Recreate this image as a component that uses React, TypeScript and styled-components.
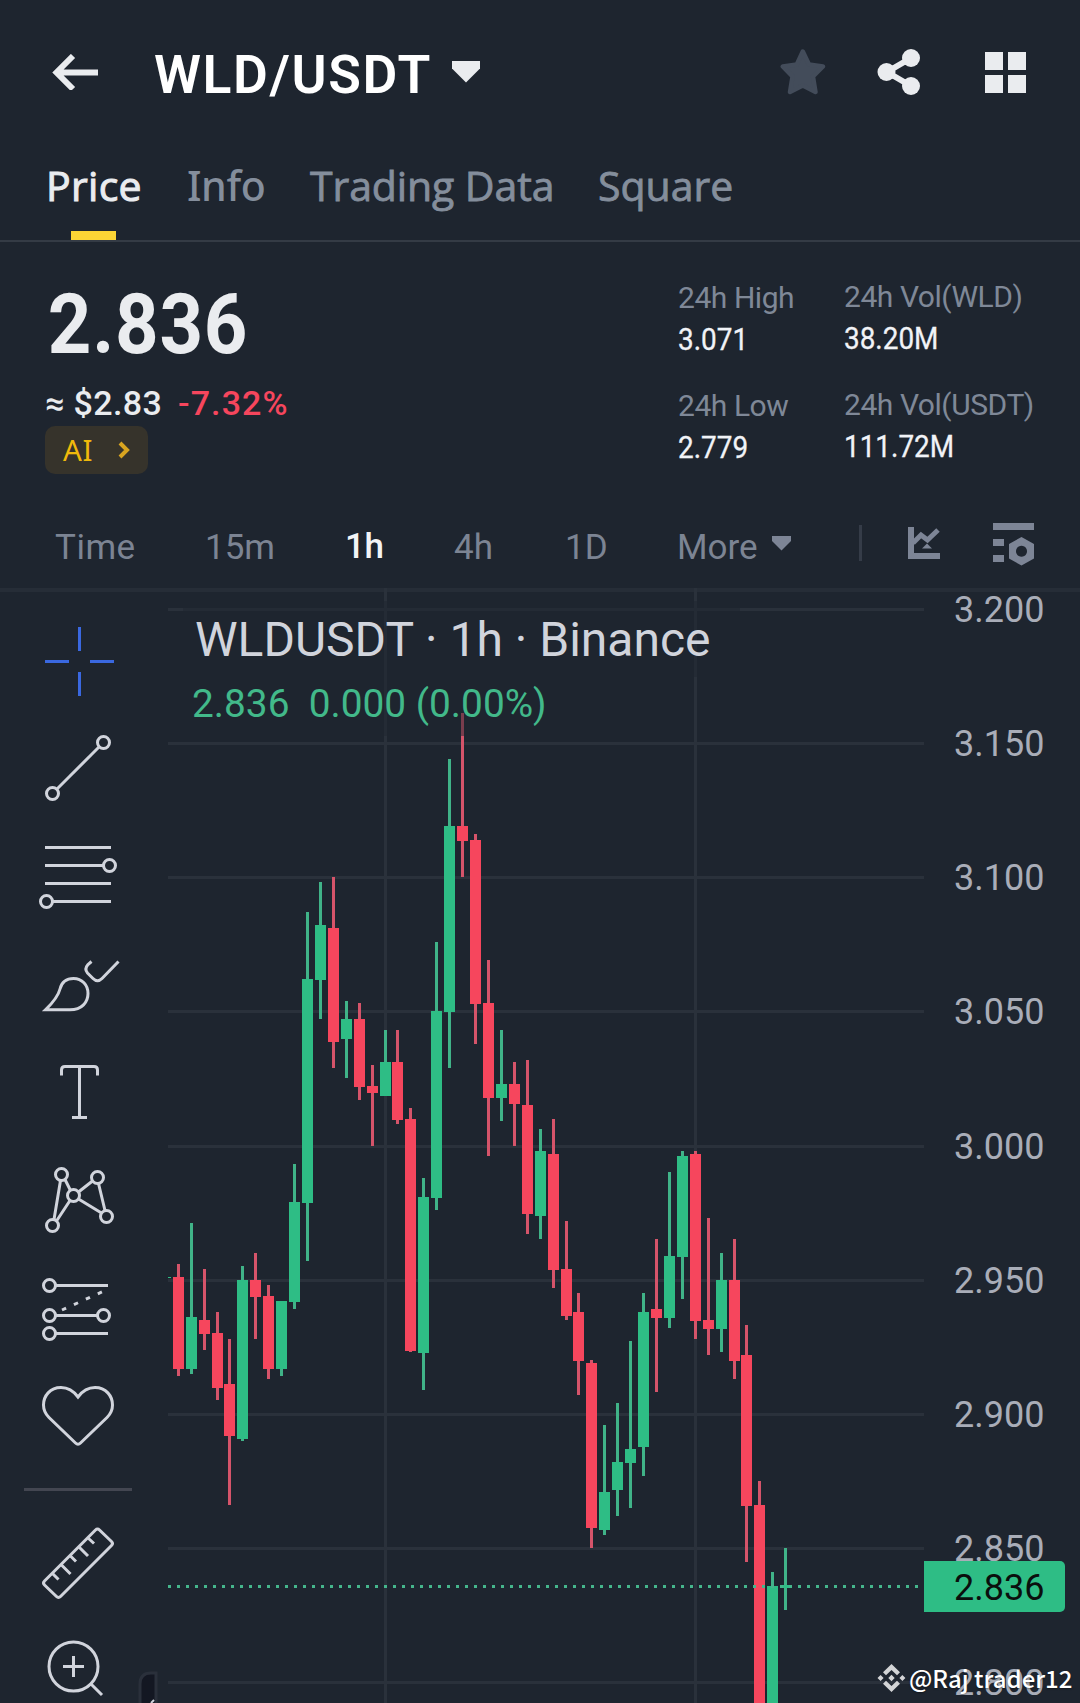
import React from 'react';
import styled, { createGlobalStyle } from 'styled-components';

const BG = '#1e252f';
const UP = '#2ebd85';
const DOWN = '#f6465d';

const GlobalStyle = createGlobalStyle`
  html, body { margin: 0; padding: 0; background: ${BG}; }
  * { box-sizing: border-box; }
  svg { display: block; flex: none; }
`;

const Screen = styled.main`
  width: 1080px;
  height: 1703px;
  overflow: hidden;
  position: relative;
  display: flex;
  flex-direction: column;
  background: ${BG};
  color: #eaecef;
  font-family: Roboto, "Liberation Sans", sans-serif;
`;

const Header = styled.header`
  height: 144px;
  padding: 0 54px 0 52px;
  display: flex;
  align-items: center;
`;

const Pair = styled.h1`
  margin: 0 0 0 56px;
  width: 276px;
  font-size: 53.5px;
  line-height: 60px;
  font-weight: 600;
  letter-spacing: 1.6px;
  color: #fff;
  white-space: nowrap;
  padding-top: 5px;
`;

const PairCaret = styled.div`
  margin-left: 22px;
`;

const HeaderActions = styled.div`
  margin-left: auto;
  display: flex;
  align-items: center;
`;

const ActionSlot = styled.div<{ $gap: number }>`
  margin-left: ${(p) => p.$gap}px;
`;

const Tabs = styled.nav`
  height: 98px;
  border-bottom: 2px solid #343b45;
  padding-left: 46px;
  display: flex;
`;

const Tab = styled.div<{ $active?: boolean; $w: number; $track?: number }>`
  width: ${(p) => p.$w}px;
  padding-top: 13px;
  font-family: "Open Sans", "Noto Sans", sans-serif;
  font-size: 41px;
  line-height: 56px;
  font-weight: 500;
  -webkit-text-stroke: ${(p) => (p.$active ? '1px' : '0.8px')} currentColor;
  letter-spacing: ${(p) => p.$track ?? 0}px;
  white-space: nowrap;
  color: ${(p) => (p.$active ? '#eaecef' : '#848e9c')};
`;

const SlabTab = styled(Tab)`
  font-family: "Noto Sans", "Open Sans", sans-serif;
  -webkit-text-stroke: 0;
`;

const Underline = styled.div`
  width: 45px;
  height: 9px;
  margin: 18px 0 0 25px;
  background: #fcd535;
`;

const Summary = styled.section`
  height: 268px;
  display: flex;
  padding-left: 45px;
`;

const PriceBlock = styled.div`
  width: 633px;
  display: flex;
  flex-direction: column;
`;

const LastPrice = styled.div`
  margin-top: 33px;
  height: 97px;
  padding-left: 3px;
  font-size: 84px;
  line-height: 100px;
  font-weight: 700;
  letter-spacing: 0.9px;
  transform: scaleX(0.905);
  transform-origin: left;
`;

const SubPrice = styled.div`
  display: flex;
  height: 54px;
  font-size: 34px;
  line-height: 63px;
  font-weight: 500;
`;

const Fiat = styled.span`
  width: 133px;
  white-space: nowrap;
  letter-spacing: 0.35px;
`;

const Change = styled.span`
  color: ${DOWN};
  letter-spacing: 1.1px;
`;

const AiBadge = styled.div`
  width: 103px;
  height: 48px;
  border-radius: 10px;
  background: #36332b;
  color: #f0b90b;
  display: flex;
  align-items: center;
  justify-content: space-between;
  padding: 0 18px;
  font-family: "Noto Sans", sans-serif;
  font-size: 29.5px;
  line-height: 48px;
  letter-spacing: 0.6px;
`;

const Stats = styled.div`
  display: grid;
  grid-template-columns: 166px 236px;
  grid-template-rows: 108px 108px;
  padding-top: 36px;
`;

const Stat = styled.div<{ $raise?: boolean }>`
  display: flex;
  flex-direction: column;
  margin-top: ${(p) => (p.$raise ? -1 : 0)}px;
`;

const StatLabel = styled.span`
  font-size: 30px;
  line-height: 40px;
  height: 42px;
  color: #7f8897;
  white-space: nowrap;
  letter-spacing: -0.45px;
`;

const StatValue = styled.span`
  font-size: 30.5px;
  line-height: 40px;
  color: #f1f3f7;
  white-space: nowrap;
  -webkit-text-stroke: 0.3px currentColor;
  transform: scaleX(0.915);
  transform-origin: left;
`;

const Intervals = styled.nav`
  height: 82px;
  border-bottom: 4px solid #262d37;
  padding-left: 55px;
  display: flex;
`;

const Interval = styled.div<{ $w: number; $active?: boolean; $track?: number }>`
  width: ${(p) => p.$w}px;
  padding-top: ${(p) => (p.$active ? 17 : 18)}px;
  font-size: 35px;
  line-height: 40px;
  font-weight: ${(p) => (p.$active ? 500 : 400)};
  color: ${(p) => (p.$active ? '#f3f4f7' : '#7c8493')};
  letter-spacing: ${(p) => p.$track ?? 0}px;
  white-space: nowrap;
`;

const ToolSlot = styled.div<{ $top: number; $gap: number }>`
  margin: ${(p) => p.$top}px 0 0 ${(p) => p.$gap}px;
`;

const Separator = styled.div`
  width: 3px;
  height: 36px;
  margin: 15px 0 0 68px;
  background: #353c48;
`;

const ChartArea = styled.section`
  flex: 1;
  display: flex;
  position: relative;
`;

const Legend = styled.div`
  position: absolute;
  left: 183px;
  top: 9px;
  display: flex;
  flex-direction: column;
  align-items: flex-start;
`;

const LegendTitle = styled.div`
  height: 76px;
  width: 557px;
  padding-left: 12px;
  font-size: 48px;
  line-height: 78px;
  color: #d1d4dc;
  background: rgba(30, 37, 47, 0.5);
  white-space: pre;
`;

const LegendValues = styled.div`
  height: 59px;
  width: 380px;
  padding-left: 9px;
  font-size: 38.8px;
  line-height: 54px;
  color: #42b98a;
  background: rgba(30, 37, 47, 0.5);
  white-space: pre;
`;

const Watermark = styled.div`
  position: absolute;
  left: 877px;
  bottom: 7px;
  height: 36px;
  display: flex;
  align-items: center;
  gap: 3px;
  color: #fff;
  font-family: "Noto Sans CJK SC", "Noto Sans", sans-serif;
  font-size: 24px;
  line-height: 36px;
  font-weight: 500;
  white-space: nowrap;
  text-shadow: 0 1px 2px rgba(0, 0, 0, 0.4);
`;

type Candle = [x: number, up: 0 | 1, high: number, top: number, bottom: number, low: number];

const candles: Candle[] = [
  [173, 0, 1264, 1277, 1369, 1376],
  [186, 1, 1223, 1317, 1369, 1374],
  [199, 0, 1269, 1320, 1334, 1350],
  [212, 0, 1312, 1333, 1388, 1400],
  [224, 0, 1339, 1384, 1436, 1505],
  [237, 1, 1266, 1280, 1439, 1441],
  [250, 0, 1253, 1280, 1297, 1339],
  [263, 0, 1285, 1296, 1369, 1379],
  [276, 1, 1301, 1301, 1369, 1376],
  [289, 1, 1164, 1202, 1302, 1309],
  [302, 1, 912, 979, 1203, 1261],
  [315, 1, 882, 925, 980, 1019],
  [328, 0, 877, 928, 1042, 1068],
  [341, 1, 1001, 1019, 1039, 1078],
  [354, 0, 1003, 1019, 1087, 1100],
  [367, 0, 1065, 1086, 1093, 1146],
  [380, 1, 1030, 1062, 1096, 1096],
  [392, 0, 1030, 1062, 1120, 1124],
  [405, 0, 1108, 1119, 1351, 1352],
  [418, 1, 1178, 1197, 1353, 1390],
  [431, 1, 942, 1011, 1198, 1210],
  [444, 1, 759, 826, 1012, 1068],
  [457, 0, 713, 826, 841, 877],
  [470, 0, 834, 840, 1004, 1044],
  [483, 0, 960, 1003, 1098, 1156],
  [496, 1, 1030, 1084, 1098, 1121],
  [509, 0, 1062, 1084, 1104, 1146],
  [522, 0, 1060, 1105, 1214, 1234],
  [535, 1, 1129, 1151, 1216, 1239],
  [548, 0, 1119, 1154, 1270, 1288],
  [561, 0, 1221, 1269, 1316, 1320],
  [573, 0, 1293, 1312, 1361, 1395],
  [586, 0, 1360, 1363, 1528, 1548],
  [599, 1, 1425, 1492, 1530, 1535],
  [612, 1, 1403, 1462, 1490, 1516],
  [625, 1, 1341, 1449, 1463, 1508],
  [638, 1, 1293, 1312, 1447, 1476],
  [651, 0, 1239, 1309, 1318, 1392],
  [664, 1, 1172, 1256, 1318, 1328],
  [677, 1, 1151, 1156, 1257, 1299],
  [690, 0, 1151, 1154, 1321, 1339],
  [703, 0, 1218, 1320, 1329, 1355],
  [716, 1, 1253, 1280, 1329, 1352],
  [729, 0, 1239, 1280, 1361, 1379],
  [741, 0, 1325, 1355, 1506, 1562],
  [754, 0, 1481, 1505, 1703, 1703],
  [767, 1, 1572, 1586, 1703, 1703],
  [780, 1, 1548, 1585, 1588, 1610],
];

const levels: [string, number][] = [
  ['3.200', 609.5],
  ['3.150', 743.5],
  ['3.100', 877.5],
  ['3.050', 1011.5],
  ['3.000', 1146.5],
  ['2.950', 1280.5],
  ['2.900', 1414.5],
  ['2.850', 1548.5],
  ['2.800', 1682.5],
];

const AxisText = styled.text<{ $ink: string }>`
  font-family: Roboto, "Liberation Sans", sans-serif;
  font-size: 36px;
  fill: ${(p) => p.$ink};
`;

const ChartSvg = styled.svg`
  overflow: visible;
`;

function CandleChart() {
  return (
    <ChartSvg width="912" height="1111" viewBox="168 592 912 1111">
      <g stroke="#2a313b" strokeWidth="3">
        {levels.map(([label, y]) => (
          <line key={label} x1="168" x2="924" y1={y} y2={y} />
        ))}
        <line x1="385.5" x2="385.5" y1="588" y2="1703" />
        <line x1="695.5" x2="695.5" y1="588" y2="1703" />
      </g>
      <rect x="168" y="1277" width="3" height="1" fill={UP} />
      {candles.map(([x, up, high, top, bottom, low]) => (
        <g key={x} fill={up ? UP : DOWN}>
          <rect x={x + 4} y={high} width="3" height={low - high} fill={up ? '#40b388' : '#d5546a'} />
          <rect x={x} y={top} width="11" height={bottom - top} />
        </g>
      ))}
      <line x1="168" x2="922" y1="1586.5" y2="1586.5" stroke="#45b68c" strokeWidth="3" strokeDasharray="3 6" />
      {levels.map(([label, y]) => (
        <AxisText key={label} $ink="#a9adb8" x="954" y={y + 12.5}>
          {label}
        </AxisText>
      ))}
      <path d="M924 1561h136a5 5 0 0 1 5 5v41a5 5 0 0 1-5 5H924z" fill={UP} />
      <AxisText $ink="#0a0f0d" x="954" y="1600">
        2.836
      </AxisText>
    </ChartSvg>
  );
}

function DrawingTools() {
  return (
    <svg width="168" height="1111" viewBox="0 592 168 1111" fill="none" stroke="#d1d4dc" strokeWidth="3">
      <path d="M45 661.5h24M90 661.5h24M79.5 627v24M79.5 672v24" stroke="#3a68e0" />
      <circle cx="52.5" cy="793.5" r="6" />
      <circle cx="103.5" cy="742.5" r="6" />
      <path d="M57 789l42-42" />
      <path d="M45 847.5h66M45 865.5h58M45 883.5h66M53 901.5h58" />
      <circle cx="109.5" cy="865.5" r="6" />
      <circle cx="46.5" cy="901.5" r="6" />
      <path d="M45.5 1009.8H70C82 1009.8 88 1002 88 993.5C88 985 82 978.5 73.5 978.5C66 978.5 61.5 983 60 989C58 997 51 1004.5 45.5 1009.8Z" />
      <path d="M91.5 961.5L88 964.5Q84 969 87.5 973L93 978.5Q97.5 983 102 978.5L118.5 961.5" />
      <path d="M61.5 1075.5V1070q0-3.5 3.5-3.5H94q3.5 0 3.5 3.5v5.5M79.5 1066.5v51M72 1117.5h15" />
      <circle cx="61.5" cy="1174.5" r="6" />
      <circle cx="97.5" cy="1177.5" r="6" />
      <circle cx="73.5" cy="1195.5" r="6" />
      <circle cx="52.5" cy="1225.5" r="6" />
      <circle cx="106.5" cy="1216.5" r="6" />
      <path d="M60.5 1180.5L54 1219.5M65 1179.5L70.5 1190.5M92.5 1181L78.5 1192M70 1200.5L56.5 1221M98.5 1183.5L105 1210.5M78.5 1199L101.5 1213" />
      <circle cx="49.5" cy="1285.5" r="6" />
      <circle cx="49.5" cy="1315.5" r="6" />
      <circle cx="103.5" cy="1315.5" r="6" />
      <circle cx="49.5" cy="1333.5" r="6" />
      <path d="M56 1285.5h52M56 1315.5h41M56 1333.5h52" />
      <path d="M62 1310L104 1291" strokeDasharray="4.5 8.6" />
      <path d="M78 1397Q71 1387.5 61 1387.5C50 1387.5 43.5 1396 43.5 1405Q43.5 1412 49 1417.5L75.5 1443Q78 1445.5 80.5 1443L107 1417.5Q112.5 1412 112.5 1405C112.5 1396 106 1387.5 95 1387.5Q85 1387.5 78 1397Z" />
      <path d="M24 1489.5h108" stroke="#434651" />
      <path d="M95.5 1530Q97.5 1528 99.5 1530L111.5 1541.5Q113.5 1543.5 111.5 1545.5L60.5 1596.5Q58.5 1598.5 56.5 1596.5L44.5 1585Q42.5 1583 44.5 1581Z" />
      <path d="M52.5 1573.5l6 6M61 1564.5l9.5 9.5M70 1555.5l6 6M78.5 1546.5l9.5 9.5M87.5 1537.5l6.5 6" />
      <circle cx="73.5" cy="1666.5" r="24.5" />
      <path d="M63 1666.5h21M73.5 1656v21M91 1684l11 11" />
      <path d="M140 1706V1684q0-11 11-11h5v33z" fill="#131722" stroke="#2a303b" />
      <path d="M151 1703l3-3" strokeWidth="2" />
    </svg>
  );
}

export default function App() {
  return (
    <Screen>
      <GlobalStyle />
      <Header>
        <svg width="46" height="36" viewBox="0 0 46 36" fill="none" stroke="#eaecef" strokeWidth="6">
          <path d="M46 18.5H4M21 2L4.5 18.5L21 35" />
        </svg>
        <Pair>WLD/USDT</Pair>
        <PairCaret>
          <svg width="28" height="22" viewBox="0 0 28 22" fill="#eaecef">
            <path d="M0 0h28v7.5L14 21.5L0 7.5z" />
          </svg>
        </PairCaret>
        <HeaderActions>
          <svg width="46" height="48" viewBox="0 0 46 48">
            <path
              d="M22.8 3.5L29 16.5L43 18.5L33 28.5L35.5 44L22.8 37.5L10 44L12.5 28.5L2.8 18.5L16.8 16.5Z"
              fill="#434c5a"
              stroke="#434c5a"
              strokeWidth="4.5"
              strokeLinejoin="round"
            />
          </svg>
          <ActionSlot $gap={51}>
            <svg width="44" height="48" viewBox="0 0 44 48" fill="#eaecef">
              <path d="M34 10L10 24L34 38" fill="none" stroke="#eaecef" strokeWidth="6" />
              <circle cx="34" cy="10" r="9" />
              <circle cx="9.5" cy="24" r="9" />
              <circle cx="34" cy="38" r="9" />
            </svg>
          </ActionSlot>
          <ActionSlot $gap={64}>
            <svg width="41" height="41" viewBox="0 0 41 41" fill="#eaecef">
              <path d="M0 0h18v18H0zM23 0h18v18H23zM0 23h18v18H0zM23 23h18v18H23z" />
            </svg>
          </ActionSlot>
        </HeaderActions>
      </Header>

      <Tabs>
        <Tab $active $w={141} $track={0.3}>
          Price
          <Underline />
        </Tab>
        <SlabTab $w={123} $track={-0.4}>Info</SlabTab>
        <Tab $w={288} $track={-0.1}>Trading Data</Tab>
        <Tab $w={150}>Square</Tab>
      </Tabs>

      <Summary>
        <PriceBlock>
          <LastPrice>2.836</LastPrice>
          <SubPrice>
            <Fiat>≈ $2.83</Fiat>
            <Change>-7.32%</Change>
          </SubPrice>
          <AiBadge>
            AI
            <svg width="12" height="18" viewBox="0 0 12 18" fill="none" stroke="#d9a520" strokeWidth="4">
              <path d="M2 2l7 7l-7 7" />
            </svg>
          </AiBadge>
        </PriceBlock>
        <Stats>
          <Stat>
            <StatLabel>24h High</StatLabel>
            <StatValue>3.071</StatValue>
          </Stat>
          <Stat $raise>
            <StatLabel>24h Vol(WLD)</StatLabel>
            <StatValue>38.20M</StatValue>
          </Stat>
          <Stat>
            <StatLabel>24h Low</StatLabel>
            <StatValue>2.779</StatValue>
          </Stat>
          <Stat $raise>
            <StatLabel>24h Vol(USDT)</StatLabel>
            <StatValue>111.72M</StatValue>
          </Stat>
        </Stats>
      </Summary>

      <Intervals>
        <Interval $w={150} $track={0.5}>Time</Interval>
        <Interval $w={140}>15m</Interval>
        <Interval $w={109} $active $track={-0.5}>1h</Interval>
        <Interval $w={111}>4h</Interval>
        <Interval $w={112}>1D</Interval>
        <Interval $w={82}>More</Interval>
        <ToolSlot $top={26} $gap={13}>
          <svg width="19" height="15" viewBox="0 0 19 15" fill="#7d8596">
            <path d="M0 0h19v5L9.5 14.5L0 5z" />
          </svg>
        </ToolSlot>
        <Separator />
        <ToolSlot $top={17} $gap={46}>
          <svg width="33" height="33" viewBox="0 0 33 33" fill="#7d8596">
            <path d="M0 0h6v26h26v6H0z" />
            <path d="M5 16L13 8L19.5 13L30 3" fill="none" stroke="#7d8596" strokeWidth="5" />
            <path d="M19 16.5l5 5H14z" />
          </svg>
        </ToolSlot>
        <ToolSlot $top={13} $gap={52}>
          <svg width="42" height="43" viewBox="0 0 42 43" fill="#7d8596">
            <path d="M0 0h41v7H0zM0 16h11v7H0zM0 32h11v7H0z" />
            <path
              fillRule="evenodd"
              d="M28.5 14l12.5 7v14.5l-12.5 7l-12.5-7V21zM28.5 22.8a5.5 5.5 0 1 0 .01 0z"
            />
          </svg>
        </ToolSlot>
      </Intervals>

      <ChartArea>
        <DrawingTools />
        <CandleChart />
        <Legend>
          <LegendTitle>WLDUSDT · 1h · Binance</LegendTitle>
          <LegendValues>2.836  0.000 (0.00%)</LegendValues>
        </Legend>
        <Watermark>
          <svg width="29" height="28" viewBox="0 0 28 28" fill="#d3d4d6">
            <path d="M14 0L22.5 8.3L19.5 11.3L14 6L8.5 11.3L5.5 8.3zM14 28L22.5 19.7L19.5 16.7L14 22L8.5 16.7L5.5 19.7z" />
            <path d="M14 10.8l3.2 3.2L14 17.2L10.8 14zM3.1 11l3 3l-3 3L0 14zM24.9 11l3 3l-3 3l-3-3z" />
          </svg>
          @Raj trader12
        </Watermark>
      </ChartArea>
    </Screen>
  );
}
